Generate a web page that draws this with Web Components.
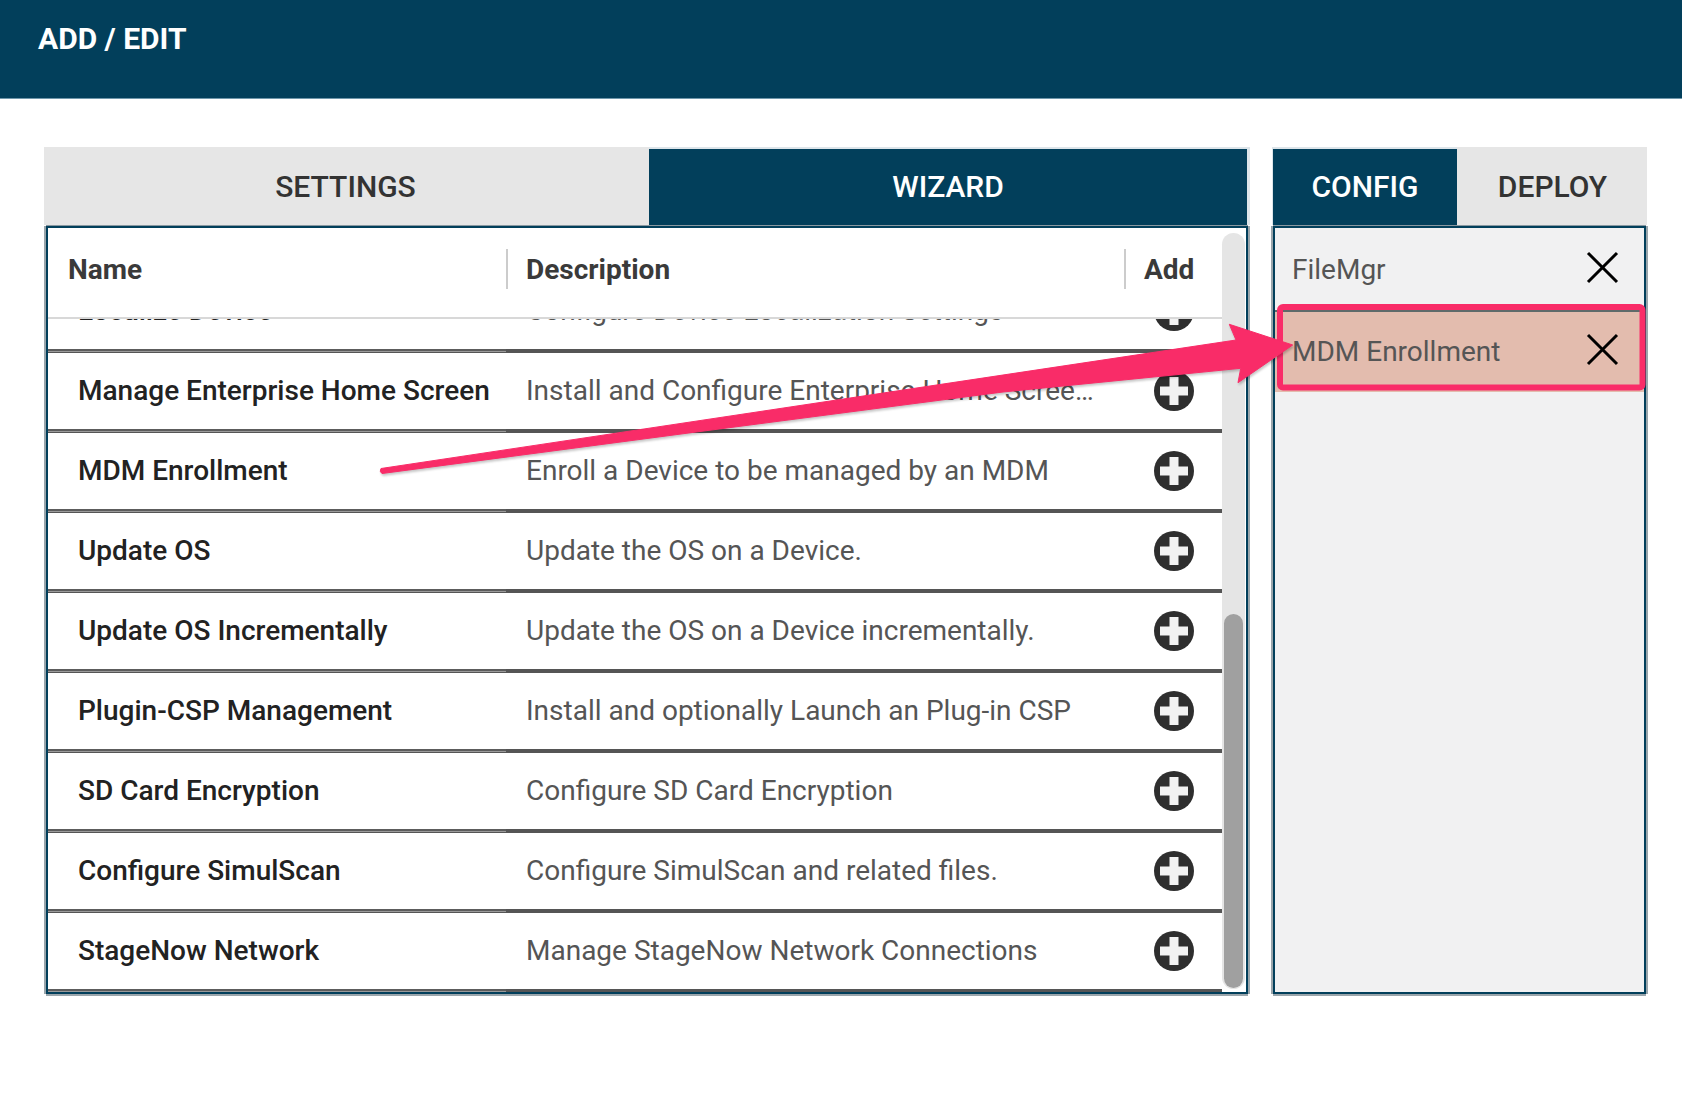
<!DOCTYPE html>
<html><head><meta charset="utf-8"><style>
html,body{margin:0;padding:0;background:#fff;width:1682px;height:1100px;overflow:hidden;font-family:Roboto,"Liberation Sans",sans-serif}
</style></head><body>
<template id="t-bar"><style>
:host{display:flex;align-items:flex-start;height:98px;background:#023f5b;border-bottom:1px solid #6f97ab;color:#fff;font:700 30px/1 Roboto,sans-serif;padding:0 0 0 38px;box-sizing:content-box}
span{margin-top:24px}
</style><span><slot></slot></span></template>
<template id="t-tabs"><style>
:host{display:grid;height:78px;background:#e6e6e6;font:500 30px/1 Roboto,sans-serif}
</style><slot></slot></template>
<template id="t-tab"><style>
:host{display:flex;align-items:center;justify-content:center;color:#333;box-sizing:border-box;padding-top:2px}
:host([active]){background:#023f5b;color:#fff;box-shadow:inset 0 2px 0 #dde5ea}
</style><slot></slot></template>
<template id="t-row"><style>
:host{display:grid;grid-template-columns:458px 619px 97px;height:80px;box-sizing:border-box;align-items:center;font-size:28px;position:relative}
.n{height:100%;box-sizing:border-box;padding:0 0 5px 30px;display:flex;align-items:center;font-weight:500;color:#222;white-space:nowrap;border-bottom:1px solid #555;box-shadow:inset 0 -1px 0 #9a9a9a,inset 0 -3px 0 #5c5c5c}
.d{height:100%;box-sizing:border-box;padding:0 0 2px 20px;display:flex;align-items:center;color:#555;white-space:nowrap;border-bottom:4px solid #555}
.a{height:100%;box-sizing:border-box;display:flex;align-items:center;justify-content:center;border-bottom:4px solid #555}
svg{display:block}
</style><div class="n"><slot name="name"></slot></div><div class="d"><slot name="desc"></slot></div><div class="a"><svg width="42" height="42" viewBox="0 0 42 42"><circle cx="21" cy="21" r="20" fill="#2e2e2e"/><path d="M16.500 7h9v9.500H35v9h-9.500V35h-9v-9.500H7v-9h9.500z" fill="#f2f2f2"/></svg></div></template>
<template id="t-item"><style>
:host{display:flex;align-items:center;justify-content:space-between;height:82px;box-sizing:border-box;padding:0 25px 0 17px;font-size:28px;color:#555}
:host([hl]){background:#e3bcae;border-top:2px solid #5f6a6a;padding-bottom:2px}
svg{display:block;margin-top:-4px}
</style><span><slot></slot></span><svg width="33" height="33" viewBox="0 0 33 33"><path d="M2 2L31 31M31 2L2 31" stroke="#000" stroke-width="3" fill="none"/></svg></template>
<template id="t-page"><style>
:host{display:flex;gap:22px;padding:48px 35px 0 44px}
.left{width:1206px}
.right{width:375px}
.box{box-sizing:border-box;height:768px;margin:1px 0 0 2px;width:1202px;border:2px solid #023f5b;box-shadow:-2px 0 0 #9aa5ab,0 2px 0 #9aa5ab,2px 0 0 #9aa5ab,0 -1px 0 #8a98a0;position:relative;overflow:hidden;background:#fff}
.head{display:grid;grid-template-columns:458px 618px 98px;height:82px;padding-bottom:7px;align-items:center;font:500 28px Roboto,sans-serif;color:#3a3a3a;background:#fff;border-bottom:2px solid #d8d8d8;position:relative;z-index:1;width:1174px;box-sizing:content-box}
.head div{height:40px;display:flex;align-items:center;box-sizing:border-box;font-weight:700}
.head div+div{border-left:2px solid #ccc;padding-left:18px}
.head div:first-child{padding-left:20px}
.body{position:relative;margin-top:-46px;width:1174px;font-family:Roboto,sans-serif}
.track{position:absolute;left:1174px;top:5px;bottom:3px;width:23px;background:#e5e5e5;border-radius:11.5px;z-index:2}
.thumb{position:absolute;left:2px;right:2px;bottom:1px;height:374px;background:#a0a0a0;border-radius:10px}
.list{background:#f1f1f2;width:373px;margin-left:1px;font-family:Roboto,sans-serif}
</style>
<div class="left"><slot name="ltabs"></slot>
<div class="box"><div class="head"><div>Name</div><div>Description</div><div>Add</div></div><div class="body"><slot name="rows"></slot></div><div class="track"><div class="thumb"></div></div></div></div>
<div class="right"><slot name="rtabs"></slot><div class="box list"><slot name="items"></slot></div></div>
</template>
<template id="t-arrow"><style>
:host{position:absolute;left:0;top:0;width:1682px;height:1100px;pointer-events:none;z-index:10}
svg{display:block}
.ar{filter:drop-shadow(1px 2px 1px rgba(0,0,0,.22))}
</style><svg width="1682" height="1100" viewBox="0 0 1682 1100"><rect x="1280" y="307" width="362.500" height="80.500" fill="none" stroke="#f92c68" stroke-width="6" rx="3"/><path class="ar" d="M381 468.500L1236 340L1229.300 324.300L1292.700 345L1238 382.700L1240.700 368.300L1003 392L700 431.500L382 473.500Q379 471.500 381 468.500Z" fill="#f92c68" stroke="#f92c68" stroke-linejoin="round"/></svg></template>
<app-bar>ADD / EDIT</app-bar>
<app-page>
<tab-strip slot="ltabs" style="grid-template-columns:605px 601px"><tab-item style="padding-right:2px">SETTINGS</tab-item><tab-item active style="border-right:3px solid #dde5ea">WIZARD</tab-item></tab-strip>
<table-row slot="rows"><span slot="name">Localize Device</span><span slot="desc">Configure Device Localization Settings</span></table-row>
<table-row slot="rows"><span slot="name">Manage Enterprise Home Screen</span><span slot="desc">Install and Configure Enterprise Home Scree…</span></table-row>
<table-row slot="rows"><span slot="name">MDM Enrollment</span><span slot="desc">Enroll a Device to be managed by an MDM</span></table-row>
<table-row slot="rows"><span slot="name">Update OS</span><span slot="desc">Update the OS on a Device.</span></table-row>
<table-row slot="rows"><span slot="name">Update OS Incrementally</span><span slot="desc">Update the OS on a Device incrementally.</span></table-row>
<table-row slot="rows"><span slot="name">Plugin-CSP Management</span><span slot="desc">Install and optionally Launch an Plug-in CSP</span></table-row>
<table-row slot="rows"><span slot="name">SD Card Encryption</span><span slot="desc">Configure SD Card Encryption</span></table-row>
<table-row slot="rows"><span slot="name">Configure SimulScan</span><span slot="desc">Configure SimulScan and related files.</span></table-row>
<table-row slot="rows"><span slot="name">StageNow Network</span><span slot="desc">Manage StageNow Network Connections</span></table-row>
<tab-strip slot="rtabs" style="grid-template-columns:185px 189px"><tab-item active style="border-left:1px solid #dde5ea">CONFIG</tab-item><tab-item style="padding-left:2px">DEPLOY</tab-item></tab-strip>
<list-item slot="items">FileMgr</list-item>
<list-item slot="items" hl>MDM Enrollment</list-item>
</app-page>
<arrow-overlay></arrow-overlay>
<script>
for(const [tag,id] of [['app-bar','t-bar'],['tab-strip','t-tabs'],['tab-item','t-tab'],['table-row','t-row'],['list-item','t-item'],['app-page','t-page'],['arrow-overlay','t-arrow']]){
customElements.define(tag,class extends HTMLElement{constructor(){super();this.attachShadow({mode:'open'}).appendChild(document.getElementById(id).content.cloneNode(true))}})
}
</script>
</body></html>
